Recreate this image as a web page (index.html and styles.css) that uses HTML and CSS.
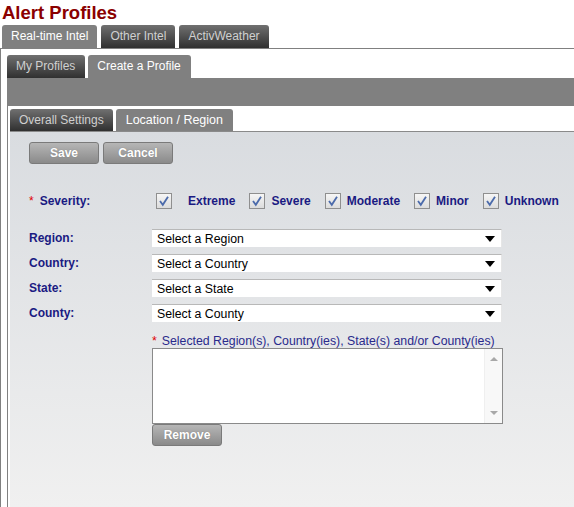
FILE: index.html
```html
<!DOCTYPE html>
<html>
<head>
<meta charset="utf-8">
<link rel="stylesheet" href="styles.css">
</head>
<body>
<h1 class="title">Alert Profiles</h1>
<div class="tabs tabs1">
  <div class="tab active">Real-time Intel</div>
  <div class="tab">Other Intel</div>
  <div class="tab">ActivWeather</div>
</div>
<div class="outer">
  <div class="tabs tabs2">
    <div class="tab t2">My Profiles</div>
    <div class="tab t2 active">Create a Profile</div>
  </div>
  <div class="band"></div>
  <div class="inner-body">
    <div class="tabs tabs3">
      <div class="tab t3">Overall Settings</div>
      <div class="tab t3 wide active">Location / Region</div>
    </div>
    <div class="content">
      <div class="buttons">
        <div class="btn">Save</div>
        <div class="btn">Cancel</div>
      </div>
      <div class="severity">
        <div class="label"><span class="req">*</span>Severity:</div>
        <div class="cbitem first"><span class="cb"><svg width="14" height="14" viewBox="0 0 14 14"><path d="M3 7 L5.8 10.8 L11 2.8" fill="none" stroke="#4c6bab" stroke-width="1.8"/></svg></span><span class="cblabel">Extreme</span></div>
        <div class="cbitem"><span class="cb"><svg width="14" height="14" viewBox="0 0 14 14"><path d="M3 7 L5.8 10.8 L11 2.8" fill="none" stroke="#4c6bab" stroke-width="1.8"/></svg></span><span class="cblabel">Severe</span></div>
        <div class="cbitem"><span class="cb"><svg width="14" height="14" viewBox="0 0 14 14"><path d="M3 7 L5.8 10.8 L11 2.8" fill="none" stroke="#4c6bab" stroke-width="1.8"/></svg></span><span class="cblabel">Moderate</span></div>
        <div class="cbitem"><span class="cb"><svg width="14" height="14" viewBox="0 0 14 14"><path d="M3 7 L5.8 10.8 L11 2.8" fill="none" stroke="#4c6bab" stroke-width="1.8"/></svg></span><span class="cblabel">Minor</span></div>
        <div class="cbitem"><span class="cb"><svg width="14" height="14" viewBox="0 0 14 14"><path d="M3 7 L5.8 10.8 L11 2.8" fill="none" stroke="#4c6bab" stroke-width="1.8"/></svg></span><span class="cblabel">Unknown</span></div>
      </div>
      <div class="row first-row">
        <div class="label">Region:</div>
        <div class="select"><span>Select a Region</span><span class="arrow"></span></div>
      </div>
      <div class="row">
        <div class="label">Country:</div>
        <div class="select"><span>Select a Country</span><span class="arrow"></span></div>
      </div>
      <div class="row">
        <div class="label">State:</div>
        <div class="select"><span>Select a State</span><span class="arrow"></span></div>
      </div>
      <div class="row">
        <div class="label">County:</div>
        <div class="select"><span>Select a County</span><span class="arrow"></span></div>
      </div>
      <div class="selected">
        <div class="sel-label"><span class="req2">*</span>Selected Region(s), Country(ies), State(s) and/or County(ies)</div>
        <div class="listbox">
          <div class="scroll"><span class="up"></span><span class="down"></span></div>
        </div>
        <div class="btn">Remove</div>
      </div>
    </div>
  </div>
</div>
</body>
</html>
```

FILE: styles.css
```css
html, body {
  margin: 0;
  padding: 0;
  height: 100%;
}
body {
  font-family: "Liberation Sans", Arial, sans-serif;
  font-size: 12px;
  display: flex;
  flex-direction: column;
  overflow: hidden;
  background: #fff;
}
.title {
  margin: 0;
  padding: 2px 0 2px 2px;
  font-size: 18.5px;
  line-height: 21px;
  font-weight: bold;
  color: #8b0000;
}
.tabs {
  display: flex;
}
.tabs1 {
  gap: 4px;
  padding-left: 2px;
  height: 23px;
}
.tab {
  padding: 0 9px;
  line-height: 23px;
  border-radius: 3px 3px 0 0;
  background: linear-gradient(#707070, #303030);
  color: #d0d0d0;
  font-size: 12px;
  white-space: nowrap;
}
.tab.active {
  background: #808080;
  color: #fff;
}
.outer {
  flex: 1;
  border-top: 1px solid #808080;
  border-left: 1px solid #808080;
  padding: 6px 0 0 6px;
  display: flex;
  flex-direction: column;
}
.tabs2 {
  gap: 3px;
  height: 23px;
}
.t2 {
  padding: 0 10px 0 9px;
}
.band {
  height: 28px;
  background: #808080;
}
.inner-body {
  flex: 1;
  border-left: 1px solid #808080;
  padding: 3px 0 0 2px;
  display: flex;
  flex-direction: column;
}
.tabs3 {
  gap: 3px;
  height: 22px;
}
.t3 {
  line-height: 22px;
  padding: 0 9px;
}
.t3.wide {
  font-size: 12.5px;
  padding: 0 10px;
}
.content {
  flex: 1;
  border-top: 1px solid #8a8a8a;
  background: linear-gradient(#d9dce0, #f0f0f0);
  padding: 10px 0 0 19px;
}
.buttons {
  display: flex;
  gap: 4px;
}
.btn {
  width: 70px;
  height: 22px;
  box-sizing: border-box;
  border: 1px solid #7a7a7a;
  border-radius: 3px;
  background: linear-gradient(#b6b6b6, #8a8a8a);
  color: #fff;
  font-weight: bold;
  font-size: 12px;
  display: flex;
  align-items: center;
  justify-content: center;
  text-shadow: 0 0 1px #777;
}
.severity {
  margin-top: 29px;
  display: flex;
  align-items: center;
  height: 16px;
}
.label {
  width: 123px;
  flex: none;
  font-weight: bold;
  color: #1a1a82;
}
.req {
  color: #e00000;
  margin-right: 6px;
  font-weight: normal;
}
.cbitem {
  display: flex;
  align-items: center;
  margin-left: 14px;
}
.cbitem.first {
  margin-left: 4px;
}
.cb {
  width: 16px;
  height: 16px;
  box-sizing: border-box;
  border: 1px solid #8f8f8f;
  background: linear-gradient(#f6f6f6, #dcdcdc);
  display: flex;
  align-items: center;
  justify-content: center;
}
.cblabel {
  margin-left: 6px;
  font-weight: bold;
  color: #1a1a82;
}
.cbitem.first .cblabel {
  margin-left: 16px;
}
.row {
  display: flex;
  align-items: center;
  margin-top: 7px;
}
.row.first-row {
  margin-top: 20px;
}
.select {
  width: 350px;
  height: 18px;
  box-sizing: border-box;
  background: #fff;
  border-top: 1px solid #b8b8b8;
  border-right: 1px solid #e6e6e6;
  padding-left: 5px;
  display: flex;
  align-items: center;
  justify-content: space-between;
  color: #000;
  font-size: 12.3px;
}
.arrow {
  width: 0;
  height: 0;
  border-left: 5px solid transparent;
  border-right: 5px solid transparent;
  border-top: 6px solid #000;
  margin-right: 6px;
}
.selected {
  margin-left: 123px;
  margin-top: 12px;
}
.sel-label {
  line-height: 14px;
  color: #2a2a8c;
  font-size: 12.3px;
  white-space: nowrap;
}
.req2 {
  color: #e00000;
  margin-right: 5px;
}
.listbox {
  width: 351px;
  height: 76px;
  box-sizing: border-box;
  border: 1px solid #8a8a8a;
  background: #fff;
  display: flex;
  justify-content: flex-end;
}
.scroll {
  width: 17px;
  background: #f8f8f8;
  border-left: 1px solid #efefef;
  display: flex;
  flex-direction: column;
  justify-content: space-between;
  align-items: center;
  padding: 8px 0 8px;
}
.up {
  width: 0;
  height: 0;
  border-left: 4px solid transparent;
  border-right: 4px solid transparent;
  border-bottom: 4px solid #a8a8a8;
}
.down {
  width: 0;
  height: 0;
  border-left: 4px solid transparent;
  border-right: 4px solid transparent;
  border-top: 4px solid #a8a8a8;
}
```
